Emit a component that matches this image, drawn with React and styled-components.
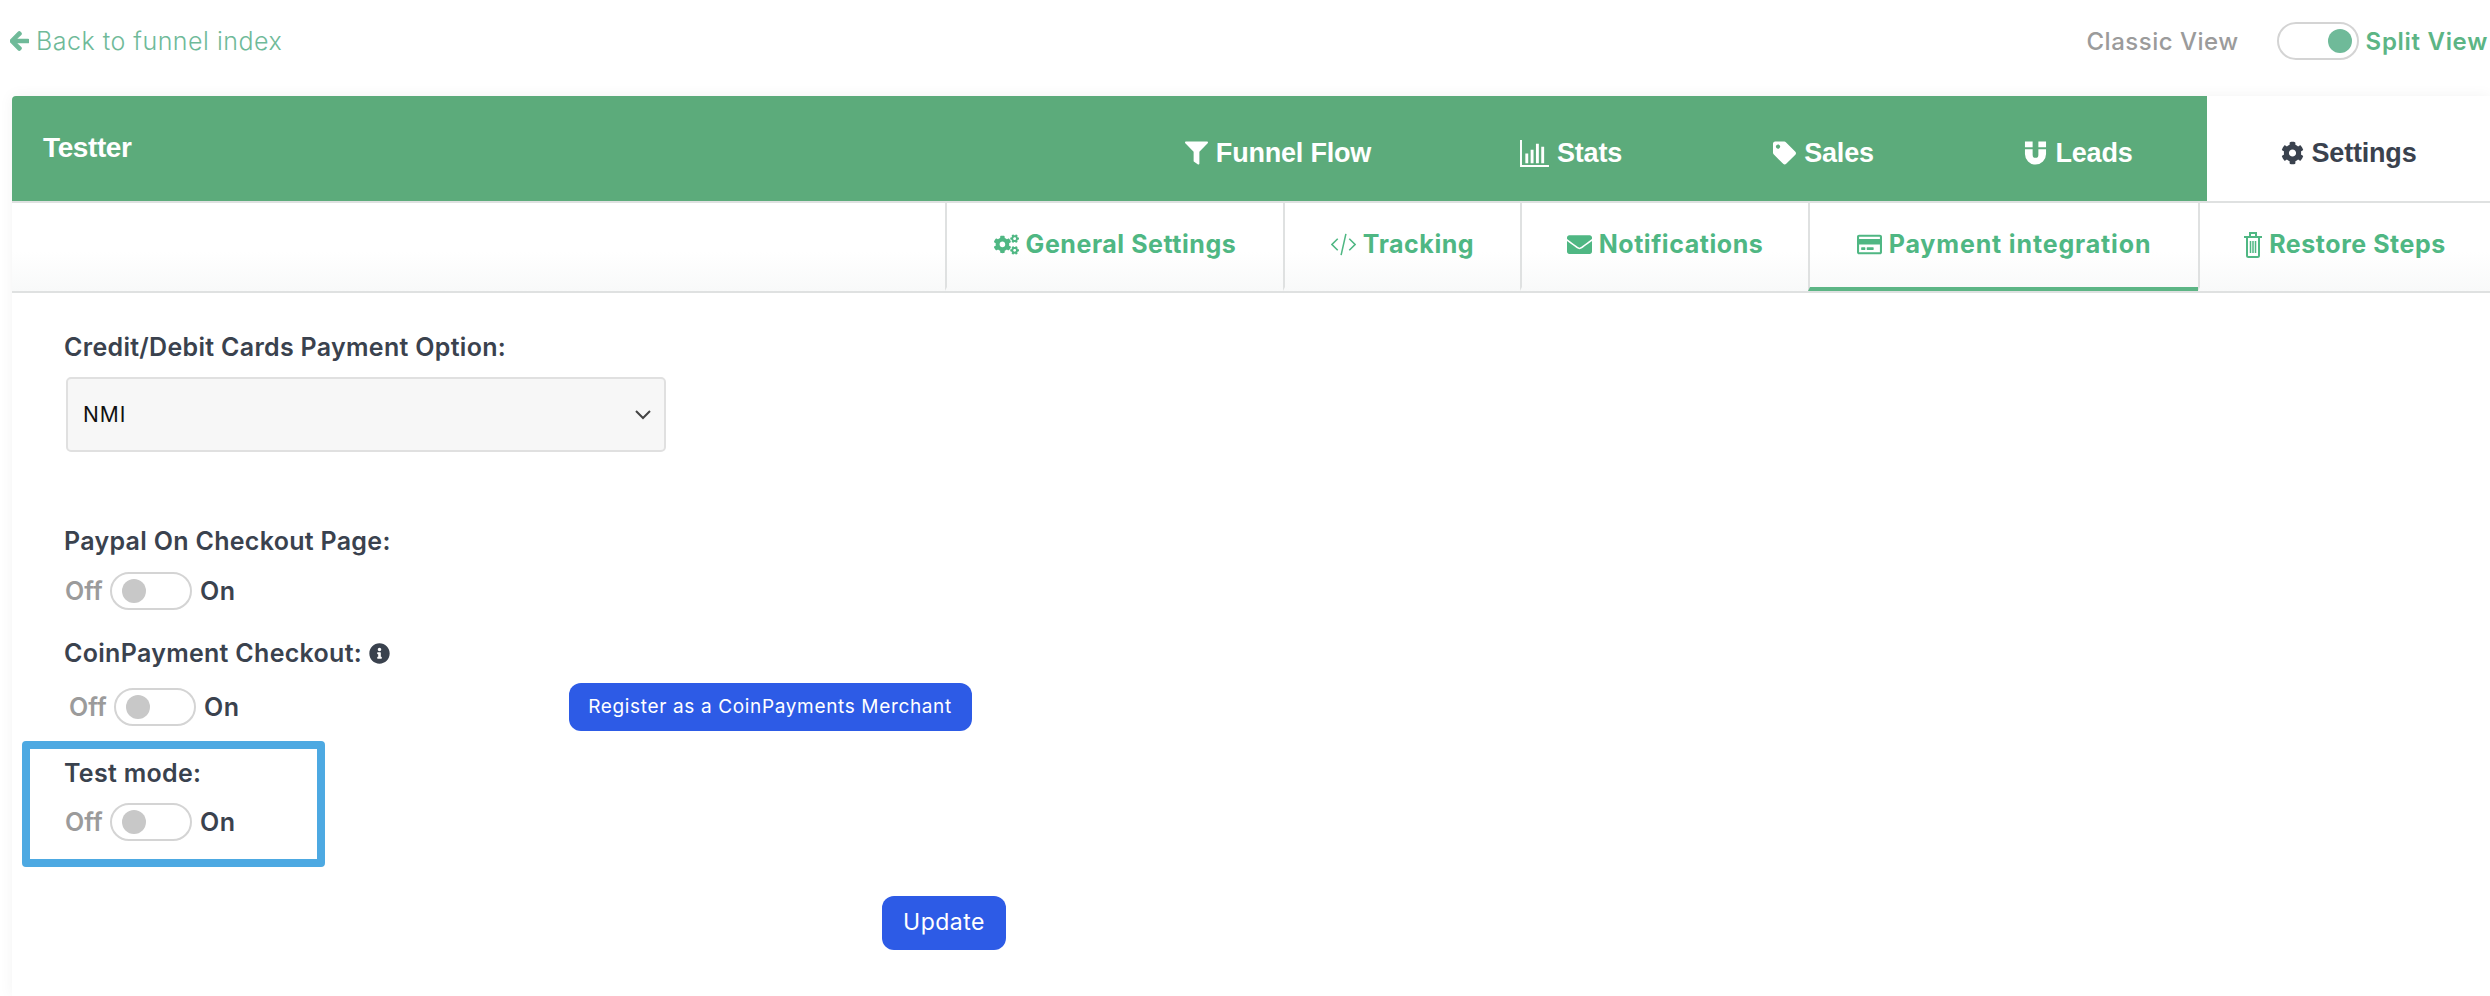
import React from 'react';
import styled, { createGlobalStyle } from 'styled-components';
import {
  FaArrowLeft,
  FaFilter,
  FaTag,
  FaCog,
  FaCogs,
  FaEnvelope,
  FaRegCreditCard,
  FaInfoCircle,
} from 'react-icons/fa';

const GlobalStyle = createGlobalStyle`
  html, body {
    margin: 0;
    background: #fff;
    font-family: Inter, "Open Sans", sans-serif;
  }
  * { box-sizing: border-box; }
`;

const Page = styled.div`
  width: 2490px;
  height: 996px;
  overflow: hidden;
  background: #fff;
`;

const TopBar = styled.div`
  height: 96px;
  display: flex;
  align-items: center;
  justify-content: space-between;
  padding: 0 2px 14px 10px;
`;

const BackLink = styled.a`
  display: flex;
  align-items: center;
  gap: 7px;
  font-size: 25px;
  font-weight: 300;
  letter-spacing: 0.5px;
  color: #6fba99;
  svg { width: 19px; height: 22px; stroke: currentColor; stroke-width: 30; }
`;

const ViewSwitch = styled.div`
  display: flex;
  align-items: center;
`;

const ClassicLabel = styled.span`
  font-size: 24px;
  font-weight: 500;
  letter-spacing: 0.5px;
  color: #9b9b9b;
  margin-right: 38px;
`;

const SplitLabel = styled.span`
  font-size: 24px;
  font-weight: 600;
  letter-spacing: 0.7px;
  color: #5cb585;
  margin-left: 7px;
`;

const Toggle = styled.span`
  width: 82px;
  height: 38px;
  flex: none;
  display: flex;
  align-items: center;
  justify-content: ${(p) => (p.$on ? 'flex-end' : 'flex-start')};
  padding: ${(p) => (p.$on ? '0 5px 0 0' : '0 0 0 10px')};
  border: 2px solid #d4d4d4;
  border-radius: 19px;
  background: #fff;
`;

const Knob = styled.span`
  width: 24px;
  height: 24px;
  border-radius: 50%;
  background: ${(p) => (p.$on ? '#6fba99' : '#c8c8c8')};
`;

const Card = styled.div`
  margin-left: 12px;
  height: 900px;
  background: #fff;
  box-shadow: 0 0 14px rgba(0, 0, 0, 0.05);
`;

const Header = styled.div`
  height: 105px;
  display: flex;
  background: #5cab7b;
  border-top-left-radius: 4px;
`;

const Title = styled.div`
  flex: 1;
  padding: 37px 0 0 31px;
  font-family: "Liberation Sans", Arial, sans-serif;
  font-size: 28px;
  line-height: 30px;
  font-weight: 700;
  color: #fff;
  letter-spacing: -0.4px;
`;

const NavItem = styled.div`
  width: ${(p) => p.$width}px;
  display: flex;
  align-items: center;
  justify-content: center;
  gap: 8px;
  padding-top: 9px;
  font-family: "Liberation Sans", Arial, sans-serif;
  font-size: 27px;
  font-weight: 700;
  letter-spacing: -0.2px;
  color: ${(p) => (p.$active ? '#3a424e' : '#fff')};
  background: ${(p) => (p.$active ? '#fff' : 'transparent')};
  svg { width: 23px; height: 24px; flex: none; }
`;

const SubNav = styled.div`
  height: 92px;
  display: flex;
  justify-content: flex-end;
  border-top: 2px solid #dfe1e1;
  border-bottom: 2px solid #dfe1e1;
  background: linear-gradient(#fff 55%, #f8f9f9);
`;

const SubTab = styled.div`
  width: ${(p) => p.$width}px;
  display: flex;
  align-items: center;
  justify-content: center;
  gap: 7px;
  padding-bottom: 2px;
  border-left: 2px solid #dfe1e1;
  border-bottom: 4px solid ${(p) => (p.$active ? '#5cb585' : 'transparent')};
  font-size: 25px;
  font-weight: 700;
  letter-spacing: ${(p) => p.$spacing || 0.55}px;
  color: #4fb783;
  svg { width: 25px; height: 25px; flex: none; }
`;

const Form = styled.div`
  padding: 39px 0 0 52px;
`;

const Label = styled.div`
  display: flex;
  align-items: center;
  gap: 7px;
  height: 30px;
  font-size: 25px;
  font-weight: 600;
  letter-spacing: 0.3px;
  color: #3a424e;
  svg { width: 21px; height: 21px; }
`;

const Select = styled.div`
  width: 600px;
  height: 75px;
  margin: 15px 0 74px 2px;
  display: flex;
  align-items: center;
  justify-content: space-between;
  padding: 0 13px 0 15px;
  background: #f7f7f7;
  border: 2px solid #e0e0e0;
  border-radius: 5px;
  font-size: 21px;
  letter-spacing: 1px;
  color: #111;
`;

const SwitchRow = styled.div`
  display: flex;
  align-items: center;
  height: 38px;
  margin-top: ${(p) => p.$top || 16}px;
  padding-left: ${(p) => p.$indent || 1}px;
`;

const OffText = styled.span`
  width: 45px;
  font-size: 25px;
  font-weight: 600;
  color: #9b9b9b;
`;

const OnText = styled.span`
  margin-left: 8px;
  font-size: 25px;
  font-weight: 600;
  letter-spacing: 0.5px;
  color: #3a424e;
`;

const Field = styled.div`
  margin-top: ${(p) => p.$top || 0}px;
`;

const Button = styled.button`
  border: 0;
  color: #fff;
  background: #2d5be6;
  border-radius: 12px;
  font-family: inherit;
  padding: 0 0 2px;
`;

const RegisterButton = styled(Button)`
  width: 403px;
  height: 48px;
  margin-left: 329px;
  flex: none;
  font-size: 19px;
  letter-spacing: 0.65px;
`;

const UpdateButton = styled(Button)`
  display: block;
  width: 124px;
  height: 54px;
  margin: 29px 0 0 818px;
  font-size: 23px;
  letter-spacing: 0.5px;
`;

const HighlightBox = styled.div`
  width: 303px;
  height: 126px;
  margin: 15px 0 0 -42px;
  padding: 9px 0 0 34px;
  border: 8px solid #4da9e2;
  border-radius: 4px;
`;

const StatsSvg = styled.svg`
  && { width: 29px; height: 27px; }
`;

const TrashSvg = styled.svg`
  && { width: 18px; height: 27px; }
`;

const StatsIcon = () => (
  <StatsSvg viewBox="0 0 30 28" fill="none" stroke="currentColor" strokeWidth="2">
    <path d="M1 0v27h29" />
    <path d="M7 14v10M12.500 10v14M18 4v20M23.500 7v17" strokeWidth="3" />
  </StatsSvg>
);

const MagnetIcon = () => (
  <svg viewBox="0 0 24 24" fill="currentColor">
    <path d="M1 0h8v6H1zM15 0h8v6h-8zM1 8h8v6a3 3 0 0 0 6 0V8h8v5a11 11 0 0 1-22 0z" />
  </svg>
);

const CodeIcon = () => (
  <svg viewBox="0 0 26 26" fill="none" stroke="currentColor" strokeWidth="1.6">
    <path d="M7 7l-6 6 6 6M19 7l6 6-6 6M15.500 2l-5 22" />
  </svg>
);

const TrashIcon = () => (
  <TrashSvg viewBox="0 0 18 27" fill="none" stroke="currentColor" strokeWidth="2">
    <path d="M0 6h18M6 6V2h6v4M3 6v18.500a1.500 1.500 0 0 0 1.500 1.500h9a1.500 1.500 0 0 0 1.500-1.500V6" />
    <path d="M6.500 10v12M9 10v12M11.500 10v12" strokeWidth="1.500" />
  </TrashSvg>
);

const ChevronIcon = () => (
  <svg width="16" height="10" viewBox="0 0 16 10" fill="none" stroke="#444" strokeWidth="2">
    <path d="M1 1l7 7 7-7" />
  </svg>
);

const navItems = [
  { label: 'Funnel Flow', icon: <FaFilter />, width: 334 },
  { label: 'Stats', icon: <StatsIcon />, width: 252 },
  { label: 'Sales', icon: <FaTag />, width: 253 },
  { label: 'Leads', icon: <MagnetIcon />, width: 257 },
  { label: 'Settings', icon: <FaCog />, width: 283, active: true },
];

const subTabs = [
  { label: 'General Settings', icon: <FaCogs />, width: 338 },
  { label: 'Tracking', icon: <CodeIcon />, width: 237 },
  { label: 'Notifications', icon: <FaEnvelope />, width: 288 },
  { label: 'Payment integration', icon: <FaRegCreditCard />, width: 390, active: true, spacing: 0.85 },
  { label: 'Restore Steps', icon: <TrashIcon />, width: 292 },
];

const OffOnSwitch = ({ top, indent, children }) => (
  <SwitchRow $top={top} $indent={indent}>
    <OffText>Off</OffText>
    <Toggle>
      <Knob />
    </Toggle>
    <OnText>On</OnText>
    {children}
  </SwitchRow>
);

export default function App() {
  return (
    <Page>
      <GlobalStyle />
      <TopBar>
        <BackLink>
          <FaArrowLeft />
          Back to funnel index
        </BackLink>
        <ViewSwitch>
          <ClassicLabel>Classic View</ClassicLabel>
          <Toggle $on>
            <Knob $on />
          </Toggle>
          <SplitLabel>Split View</SplitLabel>
        </ViewSwitch>
      </TopBar>
      <Card>
        <Header>
          <Title>Testter</Title>
          {navItems.map((item) => (
            <NavItem key={item.label} $width={item.width} $active={item.active}>
              {item.icon}
              {item.label}
            </NavItem>
          ))}
        </Header>
        <SubNav>
          {subTabs.map((tab) => (
            <SubTab key={tab.label} $width={tab.width} $active={tab.active} $spacing={tab.spacing}>
              {tab.icon}
              {tab.label}
            </SubTab>
          ))}
        </SubNav>
        <Form>
          <Label>Credit/Debit Cards Payment Option:</Label>
          <Select>
            NMI
            <ChevronIcon />
          </Select>
          <Label>Paypal On Checkout Page:</Label>
          <OffOnSwitch />
          <Field $top={28}>
            <Label>
              CoinPayment Checkout:
              <FaInfoCircle />
            </Label>
          </Field>
          <OffOnSwitch top={20} indent={5}>
            <RegisterButton>Register as a CoinPayments Merchant</RegisterButton>
          </OffOnSwitch>
          <HighlightBox>
            <Label>Test mode:</Label>
            <OffOnSwitch top={15} />
          </HighlightBox>
          <UpdateButton>Update</UpdateButton>
        </Form>
      </Card>
    </Page>
  );
}
